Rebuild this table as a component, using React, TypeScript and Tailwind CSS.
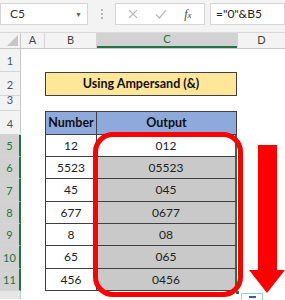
import React from 'react';

const rows = [
  {n: 5, num: '12', out: '012', h: 'h-[22px]'},
  {n: 6, num: '5523', out: '05523', h: 'h-[22px]'},
  {n: 7, num: '45', out: '045', h: 'h-[23px]'},
  {n: 8, num: '677', out: '0677', h: 'h-[22px]'},
  {n: 9, num: '8', out: '08', h: 'h-[22px]'},
  {n: 10, num: '65', out: '065', h: 'h-[23px]'},
  {n: 11, num: '456', out: '0456', h: 'h-[22px]'},
];

function RowHead({label, sel}: {label: string; sel?: boolean}) {
  return (
    <div
      className={`w-[21px] shrink-0 flex items-end justify-center pb-[2px] text-[11px] border-b border-[#d4d4d4] ${
        sel
          ? 'bg-[#d2d2d2] text-[#217346] border-r-2 border-r-[#217346]'
          : 'bg-[#f3f3f3] text-[#44546a] border-r border-r-[#c8c8c8]'
      }`}
    >
      {label}
    </div>
  );
}

export default function App() {
  return (
    <div className="relative w-[285px] h-[300px] overflow-hidden bg-white font-['Lato','Liberation_Sans',sans-serif] text-[#222]">
      {/* Formula bar */}
      <div className="h-[33px] bg-[#f3f3f3] flex items-start pt-[3px] border-b border-[#dadada]">
        <div className="w-[88px] h-[22px] bg-white border border-[#d6d6d6] flex items-center pl-[9px] pr-[5px] text-[12px] text-[#333]">
          <span className="flex-1">C5</span>
          <span className="text-[7px] text-[#666]">▼</span>
        </div>
        <div className="w-[27px] h-[22px] flex flex-col items-center justify-center gap-[2px]">
          <span className="w-[2px] h-[2px] bg-[#b5b5b5]"></span>
          <span className="w-[2px] h-[2px] bg-[#b5b5b5]"></span>
          <span className="w-[2px] h-[2px] bg-[#b5b5b5]"></span>
        </div>
        <div className="w-[90px] h-[22px] bg-white border border-[#d6d6d6] flex items-center justify-around px-[4px]">
          <svg width="10" height="10" viewBox="0 0 10 10">
            <path d="M1 1L9 9M9 1L1 9" stroke="#b9b9b9" strokeWidth="1.1" />
          </svg>
          <svg width="12" height="10" viewBox="0 0 12 10">
            <path d="M1 5.5L4.5 9L11 1" stroke="#b9b9b9" strokeWidth="1.2" fill="none" />
          </svg>
          <span className="font-['Liberation_Serif',serif] italic text-[12px] text-[#444]">
            f<span className="text-[9px]">x</span>
          </span>
        </div>
        <div className="ml-[5px] flex-1 h-[22px] bg-white border border-[#d6d6d6] flex items-center pl-[5px] text-[12px] text-[#222]">
          ="0"&amp;B5
        </div>
      </div>

      {/* Column headers */}
      <div className="flex h-[16px] bg-[#f3f3f3] border-b border-[#c8c8c8] text-[11px] text-[#444]">
        <div className="w-[21px] flex items-end justify-end pr-[2px] pb-[2px] border-r border-[#c8c8c8]">
          <div className="w-0 h-0 border-l-[11px] border-l-transparent border-b-[11px] border-b-[#c6c6c6]"></div>
        </div>
        <div className="w-[24px] flex items-center justify-center border-r border-[#d4d4d4]">A</div>
        <div className="w-[52px] flex items-center justify-center border-r border-[#d4d4d4]">B</div>
        <div className="w-[140px] flex items-center justify-center bg-[#d2d2d2] border-b-2 border-[#217346] text-[#217346]">C</div>
        <div className="flex-1 flex items-center justify-center border-l border-[#d4d4d4]">D</div>
      </div>

      {/* Rows 1-4 */}
      <div className="flex h-[23px]">
        <RowHead label="1" />
      </div>
      <div className="flex h-[24px]">
        <RowHead label="2" />
        <div className="w-[24px]"></div>
        <div className="w-[192px] bg-[#ffe699] border border-[#404040] flex items-center justify-center font-bold text-[12.5px] text-[#111]">
          Using Ampersand (&amp;)
        </div>
      </div>
      <div className="flex h-[15px]">
        <RowHead label="3" />
      </div>
      <div className="flex h-[24px]">
        <RowHead label="4" />
        <div className="w-[24px]"></div>
        <div className="w-[52px] bg-[#8ea9db] border border-[#404040] flex items-center justify-center font-bold text-[12.5px] text-[#111]">
          Number
        </div>
        <div className="w-[140px] bg-[#8ea9db] border border-l-0 border-[#404040] flex items-center justify-center font-bold text-[12.5px] text-[#111]">
          Output
        </div>
      </div>

      {/* Data rows */}
      {rows.map((r, i) => (
        <div key={r.n} className={`flex ${r.h}`}>
          <RowHead label={String(r.n)} sel />
          <div className="w-[24px]"></div>
          <div className="w-[52px] bg-white border-x border-b border-[#404040] flex items-center justify-center text-[12px]">
            {r.num}
          </div>
          <div
            className={`w-[140px] border-b border-r-2 border-b-[#404040] border-r-[#217346] flex items-center justify-center text-[12px] ${
              i === 0 ? 'bg-white' : 'bg-[#c9c9c9]'
            }`}
          >
            {r.out}
          </div>
        </div>
      ))}
      <div className="flex h-[8px]">
        <div className="w-[21px] bg-[#e6e6e6] border-r border-[#c8c8c8]"></div>
      </div>

      {/* Fill handle and paste options */}
      <div className="absolute left-[235px] top-[290px] w-[5px] h-[5px] bg-[#217346] border border-white"></div>
      <div className="absolute left-[241px] top-[293px] w-[22px] h-[10px] border border-[#9fd3b4] bg-white">
        <div className="ml-[7px] mt-[2px] w-[7px] h-[2px] bg-[#2f5fb3]"></div>
      </div>

      {/* Red rounded rectangle annotation */}
      <div className="absolute left-[93px] top-[132px] w-[150px] h-[165px] border-[5px] border-[#ff0000] rounded-[20px]"></div>

      {/* Red arrow */}
      <svg className="absolute left-[249px] top-[145px]" width="36" height="150" viewBox="0 0 36 150">
        <path d="M9 0H28V125H36L18 148L0 125H9Z" fill="#ff0000" />
      </svg>
    </div>
  );
}
